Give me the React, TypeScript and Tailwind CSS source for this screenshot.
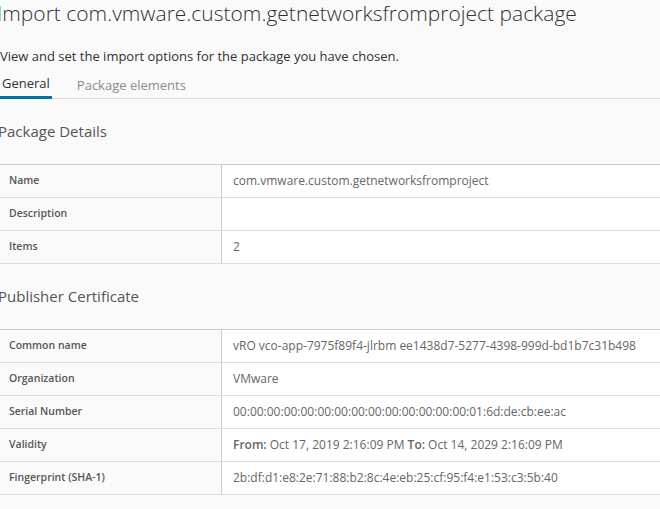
import React from "react";

const font = { fontFamily: '"Open Sans", "Noto Sans", sans-serif' };

function Row({ label, children }: { label: string; children?: React.ReactNode }) {
  return (
    <div className="flex h-[33px] border-b border-[#dddddd]">
      <div className="w-[225px] shrink-0 bg-[#fafafa] border-r border-[#cccccc] pl-[12px] flex items-center text-[10.5px] font-semibold text-[#565656]">
        {label}
      </div>
      <div className="flex-1 bg-white pl-[11px] flex items-center text-[12px] text-[#666666]">{children}</div>
    </div>
  );
}

export default function App() {
  return (
    <div className="w-[660px] h-[509px] overflow-hidden bg-[#fafafa]" style={font}>
      <div className="-ml-[3px] w-[720px]">
        <h1 className="h-[26px] text-[21px] leading-[26px] text-[#313131] font-light whitespace-nowrap">
          Import com.vmware.custom.getnetworksfromproject package
        </h1>
        <p className="mt-[22px] h-[16px] leading-[16px] text-[13px] text-[#313131] pl-[3px]">
          View and set the import options for the package you have chosen.
        </p>
        <div className="mt-[8px] h-[27px] flex border-b border-[#dddddd] pl-[3px]">
          <div className="h-[27px] -mb-px border-b-[3px] border-[#0072a3] px-[2px] text-[13px] text-[#313131] flex items-center">
            General
          </div>
          <div className="h-[27px] ml-[25px] text-[13px] text-[#8c8c8c] flex items-center">Package elements</div>
        </div>
        <h2 className="mt-[23px] h-[18px] leading-[18px] text-[15px] font-normal text-[#565656] pl-[1px]">Package Details</h2>
        <div className="mt-[24px] border-t border-[#cccccc]">
          <Row label="Name">com.vmware.custom.getnetworksfromproject</Row>
          <Row label="Description" />
          <Row label="Items">2</Row>
        </div>
        <h2 className="mt-[23px] h-[18px] leading-[18px] text-[15px] font-normal text-[#565656] pl-[1px]">Publisher Certificate</h2>
        <div className="mt-[24px] border-t border-[#cccccc]">
          <Row label="Common name">vRO vco-app-7975f89f4-jlrbm ee1438d7-5277-4398-999d-bd1b7c31b498</Row>
          <Row label="Organization">VMware</Row>
          <Row label="Serial Number">00:00:00:00:00:00:00:00:00:00:00:00:00:00:01:6d:de:cb:ee:ac</Row>
          <Row label="Validity">
            <span className="font-semibold">From:</span>&nbsp;Oct 17, 2019 2:16:09 PM&nbsp;<span className="font-semibold">To:</span>&nbsp;Oct 14, 2029 2:16:09 PM
          </Row>
          <Row label="Fingerprint (SHA-1)">2b:df:d1:e8:2e:71:88:b2:8c:4e:eb:25:cf:95:f4:e1:53:c3:5b:40</Row>
        </div>
      </div>
    </div>
  );
}
